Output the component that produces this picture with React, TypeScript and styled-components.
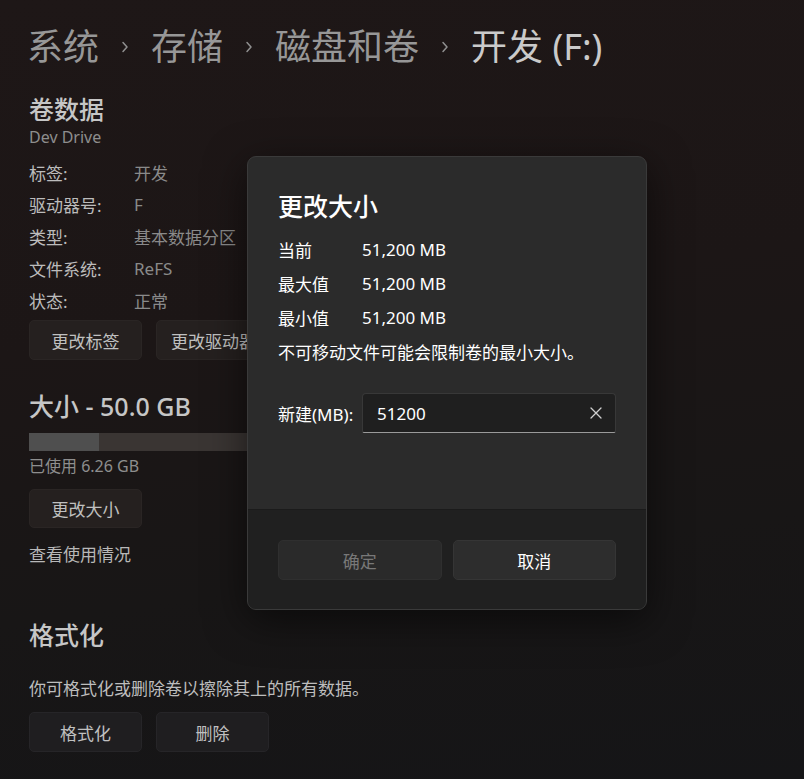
import React from "react";
import styled, { createGlobalStyle } from "styled-components";

const Global = createGlobalStyle`
  html, body { margin: 0; padding: 0; background: #181515; }
  body { font-family: "Noto Sans", "Noto Sans CJK SC", sans-serif; }
  * { box-sizing: border-box; }
`;

const Page = styled.div`
  position: relative;
  width: 804px;
  height: 779px;
  overflow: hidden;
  padding: 0 29px;
  background: linear-gradient(172deg, #1e1717 0%, #1c1616 40%, #181616 70%, #151517 100%);
  font-size: 17px;
  color: #c2c2c2;
`;

const Breadcrumb = styled.div`
  margin-top: 25px;
  height: 44px;
  display: flex;
  align-items: center;
  gap: 21px;
  margin-left: -2px;
  font-size: 36px;
  font-weight: 400;
  line-height: 44px;
`;

const Crumb = styled.span<{ $current?: boolean }>`
  color: ${(p) => (p.$current ? "#cacaca" : "#979797")};
  white-space: nowrap;
`;

const Chevron = () => (
  <svg width="10" height="16" viewBox="0 0 10 16" fill="none">
    <path d="M3 3.5 L7 8 L3 12.5" stroke="#8f8f8f" strokeWidth="1.5" strokeLinecap="round" strokeLinejoin="round" />
  </svg>
);

const Heading = styled.div<{ $mt: number }>`
  margin-top: ${(p) => p.$mt}px;
  font-size: 25px;
  font-weight: 500;
  line-height: 32px;
  color: #c6c6c6;
`;

const Caption = styled.div<{ $mt: number }>`
  margin-top: ${(p) => p.$mt}px;
  font-size: 16px;
  line-height: 22px;
  color: #8e8e8e;
`;

const Props = styled.div`
  margin-top: 8px;
  display: grid;
  grid-template-columns: 105px auto;
  grid-auto-rows: 32px;
  align-items: center;
`;

const PropLabel = styled.span`
  color: #bcbcbc;
`;

const PropValue = styled.span`
  color: #8a8a8a;
`;

const ButtonRow = styled.div<{ $mt: number }>`
  margin-top: ${(p) => p.$mt}px;
  display: flex;
  gap: 14px;
`;

const PageButton = styled.button<{ $h?: number }>`
  min-width: 113px;
  height: ${(p) => p.$h ?? 40}px;
  border-radius: 5px;
  border: 1px solid #2a2524;
  background: #25201f;
  color: #c0c0c0;
  font-family: inherit;
  font-size: 17px;
  padding: 0 14px;
  white-space: nowrap;
`;

const FormatButton = styled(PageButton)`
  background: #1f1e20;
  border-color: #262528;
`;

const Bar = styled.div`
  margin-top: 11px;
  height: 18px;
  width: 560px;
  background: #3a3533;
`;

const BarFill = styled.div`
  height: 100%;
  background: #4f4f4f;
`;

const LinkText = styled.div<{ $mt: number }>`
  margin-top: ${(p) => p.$mt}px;
  line-height: 24px;
  color: #b8b8b8;
`;

const Body = styled.div<{ $mt: number }>`
  margin-top: ${(p) => p.$mt}px;
  line-height: 24px;
  color: #bdbdbd;
`;

/* Dialog */

const Dialog = styled.div`
  position: absolute;
  left: 247px;
  top: 156px;
  width: 400px;
  height: 454px;
  border-radius: 9px;
  border: 1px solid #3a3a3a;
  background: #2b2b2b;
  box-shadow: 0 10px 40px rgba(0, 0, 0, 0.55);
  overflow: hidden;
  display: flex;
  flex-direction: column;
  color: #ffffff;
`;

const DialogContent = styled.div`
  height: 352px;
  padding: 31px 30px 0 30px;
`;

const DialogTitle = styled.div`
  font-size: 25px;
  font-weight: 500;
  line-height: 36px;
`;

const InfoGrid = styled.div`
  margin-top: 8px;
  display: grid;
  grid-template-columns: 84px auto;
  grid-auto-rows: 34px;
  align-items: center;
`;

const Message = styled.div`
  grid-column: 1 / span 2;
`;

const InputRow = styled.div`
  margin-top: 25px;
  display: grid;
  grid-template-columns: 84px 254px;
  align-items: center;
`;

const InputBox = styled.div`
  height: 40px;
  border: 1px solid #383838;
  border-bottom: 1px solid #9a9a9a;
  border-radius: 4px 4px 2px 2px;
  background: #1f1f1f;
  display: flex;
  align-items: center;
  padding: 0 13px 0 14px;
  justify-content: space-between;
`;

const InputText = styled.span`
  font-size: 17px;
  color: #ffffff;
`;

const ClearIcon = () => (
  <svg width="12" height="12" viewBox="0 0 12 12" fill="none">
    <path d="M1 1 L11 11 M11 1 L1 11" stroke="#cfcfcf" strokeWidth="1.3" strokeLinecap="round" />
  </svg>
);

const Footer = styled.div`
  flex: 1;
  background: #202020;
  border-top: 1px solid #1b1b1b;
  padding: 30px 30px 0 30px;
  display: grid;
  grid-template-columns: 1fr 1fr;
  gap: 11px;
  align-content: start;
`;

const DialogButton = styled.button<{ $disabled?: boolean }>`
  height: 40px;
  border-radius: 5px;
  border: 1px solid ${(p) => (p.$disabled ? "#2f2f2f" : "#353535")};
  background: ${(p) => (p.$disabled ? "#2a2a2a" : "#2d2d2d")};
  color: ${(p) => (p.$disabled ? "#787878" : "#ffffff")};
  font-family: inherit;
  font-size: 17px;
  padding: 0;
`;

export default function App() {
  return (
    <>
      <Global />
      <Page>
        <Breadcrumb>
          <Crumb>系统</Crumb>
          <Chevron />
          <Crumb>存储</Crumb>
          <Chevron />
          <Crumb>磁盘和卷</Crumb>
          <Chevron />
          <Crumb $current>开发 (F:)</Crumb>
        </Breadcrumb>

        <Heading $mt={24}>卷数据</Heading>
        <Caption $mt={1}>Dev Drive</Caption>
        <Props>
          <PropLabel>标签:</PropLabel>
          <PropValue>开发</PropValue>
          <PropLabel>驱动器号:</PropLabel>
          <PropValue>F</PropValue>
          <PropLabel>类型:</PropLabel>
          <PropValue>基本数据分区</PropValue>
          <PropLabel>文件系统:</PropLabel>
          <PropValue>ReFS</PropValue>
          <PropLabel>状态:</PropLabel>
          <PropValue>正常</PropValue>
        </Props>
        <ButtonRow $mt={4}>
          <PageButton>更改标签</PageButton>
          <PageButton>更改驱动器号</PageButton>
        </ButtonRow>

        <Heading $mt={30}>大小 - 50.0 GB</Heading>
        <Bar>
          <BarFill style={{ width: `${(6.26 / 50) * 100}%` }} />
        </Bar>
        <Caption $mt={4}>已使用 6.26 GB</Caption>
        <ButtonRow $mt={12}>
          <PageButton $h={39}>更改大小</PageButton>
        </ButtonRow>
        <LinkText $mt={15}>查看使用情况</LinkText>

        <Heading $mt={52}>格式化</Heading>
        <Body $mt={26}>你可格式化或删除卷以擦除其上的所有数据。</Body>
        <ButtonRow $mt={11}>
          <FormatButton>格式化</FormatButton>
          <FormatButton>删除</FormatButton>
        </ButtonRow>

        <Dialog>
          <DialogContent>
            <DialogTitle>更改大小</DialogTitle>
            <InfoGrid>
              <span>当前</span>
              <span>51,200 MB</span>
              <span>最大值</span>
              <span>51,200 MB</span>
              <span>最小值</span>
              <span>51,200 MB</span>
              <Message>不可移动文件可能会限制卷的最小大小。</Message>
            </InfoGrid>
            <InputRow>
              <span>新建(MB):</span>
              <InputBox>
                <InputText>51200</InputText>
                <ClearIcon />
              </InputBox>
            </InputRow>
          </DialogContent>
          <Footer>
            <DialogButton $disabled>确定</DialogButton>
            <DialogButton>取消</DialogButton>
          </Footer>
        </Dialog>
      </Page>
    </>
  );
}
